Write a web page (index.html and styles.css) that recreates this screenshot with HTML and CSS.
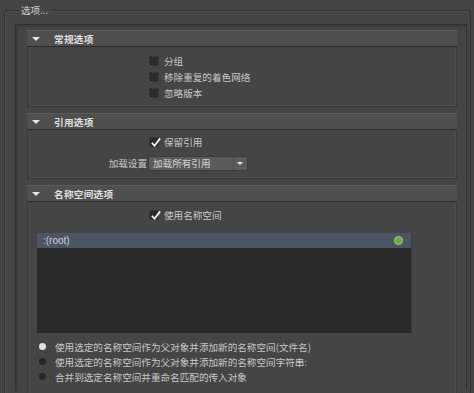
FILE: index.html
```html
<!DOCTYPE html>
<html lang="zh">
<head>
  <meta charset="UTF-8">
  <title>选项</title>
  <link rel="stylesheet" href="styles.css">
</head>
<body>

<fieldset class="frame">
  <legend>选项...</legend>
  <div class="panel">

    <div class="section">
      <div class="head"><span class="tri"></span>常规选项</div>
      <div class="body grid">
        <span></span><label class="check"><span class="box"></span>分组</label>
        <span></span><label class="check"><span class="box"></span>移除重复的着色网络</label>
        <span></span><label class="check"><span class="box"></span>忽略版本</label>
      </div>
    </div>

    <div class="section">
      <div class="head"><span class="tri"></span>引用选项</div>
      <div class="body grid refs">
        <span></span>
        <label class="check"><span class="box on"><svg viewBox="0 0 12 12"><path d="M2 6.5 L5 9.5 L11 1.5" /></svg></span>保留引用</label>
        <span class="lbl">加载设置</span>
        <div class="select">加载所有引用<span class="arrow"></span></div>
      </div>
    </div>

    <div class="section">
      <div class="head"><span class="tri"></span>名称空间选项</div>
      <div class="body ns">
        <div class="grid">
          <span></span>
          <label class="check"><span class="box on"><svg viewBox="0 0 12 12"><path d="M2 6.5 L5 9.5 L11 1.5" /></svg></span>使用名称空间</label>
        </div>
        <div class="list">
          <div class="row sel">:(root)<span class="dot"></span></div>
        </div>
        <div class="radios">
          <label class="radio"><span class="rb on"></span>使用选定的名称空间作为父对象并添加新的名称空间(文件名)</label>
          <label class="radio"><span class="rb"></span>使用选定的名称空间作为父对象并添加新的名称空间字符串:</label>
          <label class="radio"><span class="rb"></span>合并到选定名称空间并重命名匹配的传入对象</label>
        </div>
      </div>
    </div>

  </div>
</fieldset>

</body>
</html>
```

FILE: styles.css
```css
html, body {
  margin: 0;
  padding: 0;
  height: 100%;
  overflow: hidden;
}
body {
  background: #444444;
  color: #c8c8c8;
  font-family: "Noto Sans CJK SC", "Liberation Sans", sans-serif;
  font-size: 9.6px;
  padding: 4px 0 0 4px;
  box-sizing: border-box;
}
.frame {
  margin: 0;
  padding: 0 3px 0 10px;
  width: 467px;
  height: 389px;
  box-sizing: border-box;
  border: 1px solid #343434;
  border-bottom: none;
  border-radius: 3px 3px 0 0;
  box-shadow: inset 1px 1px 0 #4e4e4e;
}
.frame legend {
  padding: 0 2px;
  margin-left: 4px;
  line-height: 12px;
  color: #cfcfcf;
}
.panel {
  margin-top: 8px;
  border: 1px solid #2f2f2f;
  border-bottom: none;
  box-shadow: inset 2px 2px 0 #3c3c3c;
  padding: 5px 9px 0 11px;
  height: 367px;
  box-sizing: border-box;
  background: #454545;
}
.section {
  margin-bottom: 6px;
}
.head {
  height: 17px;
  box-sizing: border-box;
  background: #4f4f4f;
  border-top: 1px solid #5a5a5a;
  border-bottom: 1px solid #2c2c2c;
  display: flex;
  align-items: center;
  font-weight: bold;
  color: #e0e0e0;
  letter-spacing: 0.3px;
}
.tri {
  width: 0;
  height: 0;
  border-left: 4px solid transparent;
  border-right: 4px solid transparent;
  border-top: 4px solid #e6e6e6;
  margin: 1px 14px 0 5px;
}
.body {
  border: 1px solid #3a3a3a;
  border-top: none;
  box-shadow: inset -1px -1px 0 #4d4d4d;
  background: #454545;
}
.grid {
  display: grid;
  grid-template-columns: 119px auto;
  column-gap: 2px;
  align-items: center;
}
.section:first-child .body {
  padding: 6px 0 5px;
}
.refs {
  padding: 4px 0 6px;
  row-gap: 4px;
}
.lbl {
  text-align: right;
  line-height: 18px;
}
.check {
  display: flex;
  align-items: center;
  height: 16px;
}
.box {
  width: 10px;
  height: 10px;
  background: #2b2b2b;
  border: 1px solid #383838;
  box-sizing: border-box;
  margin-right: 5px;
  position: relative;
}
.box svg {
  position: absolute;
  left: 0;
  top: -1px;
  width: 11px;
  height: 11px;
  fill: none;
  stroke: #f2f2f2;
  stroke-width: 2;
}
.select {
  width: 100px;
  height: 15px;
  box-sizing: border-box;
  background: #5b5b5b;
  border: 1px solid #3c3c3c;
  border-radius: 2px;
  padding-left: 4px;
  display: flex;
  align-items: center;
  color: #d2d2d2;
  position: relative;
  margin-left: -1px;
}
.arrow {
  position: absolute;
  right: 0;
  top: 0;
  bottom: 0;
  width: 13px;
  border-left: 1px solid #4e4e4e;
}
.arrow::after {
  content: "";
  position: absolute;
  left: 3px;
  top: 5px;
  border-left: 3px solid transparent;
  border-right: 3px solid transparent;
  border-top: 3px solid #e8e8e8;
}
.ns {
  padding: 5px 44px 20px 9px;
}
.ns .grid {
  margin-left: -9px;
}
.list {
  margin-top: 10px;
  height: 100px;
  background: #2a2a2a;
  border-right: 1px solid #3a3a3a;
}
.row {
  height: 15px;
  display: flex;
  align-items: center;
  padding-left: 6px;
  color: #d0d0d0;
  font-family: "Liberation Sans", sans-serif;
  font-size: 10px;
}
.row.sel {
  background: #4b5563;
}
.dot {
  margin-left: auto;
  margin-right: 8px;
  width: 7px;
  height: 7px;
  border-radius: 50%;
  background: #6aa93e;
  border: 1px solid #a4d27c;
}
.radios {
  margin-top: 6px;
}
.radio {
  display: flex;
  align-items: center;
  height: 15px;
  white-space: nowrap;
}
.rb {
  width: 7px;
  height: 7px;
  border-radius: 50%;
  background: #262626;
  margin: 0 9px 0 2px;
}
.rb.on {
  background: #e2e2e2;
}
```
